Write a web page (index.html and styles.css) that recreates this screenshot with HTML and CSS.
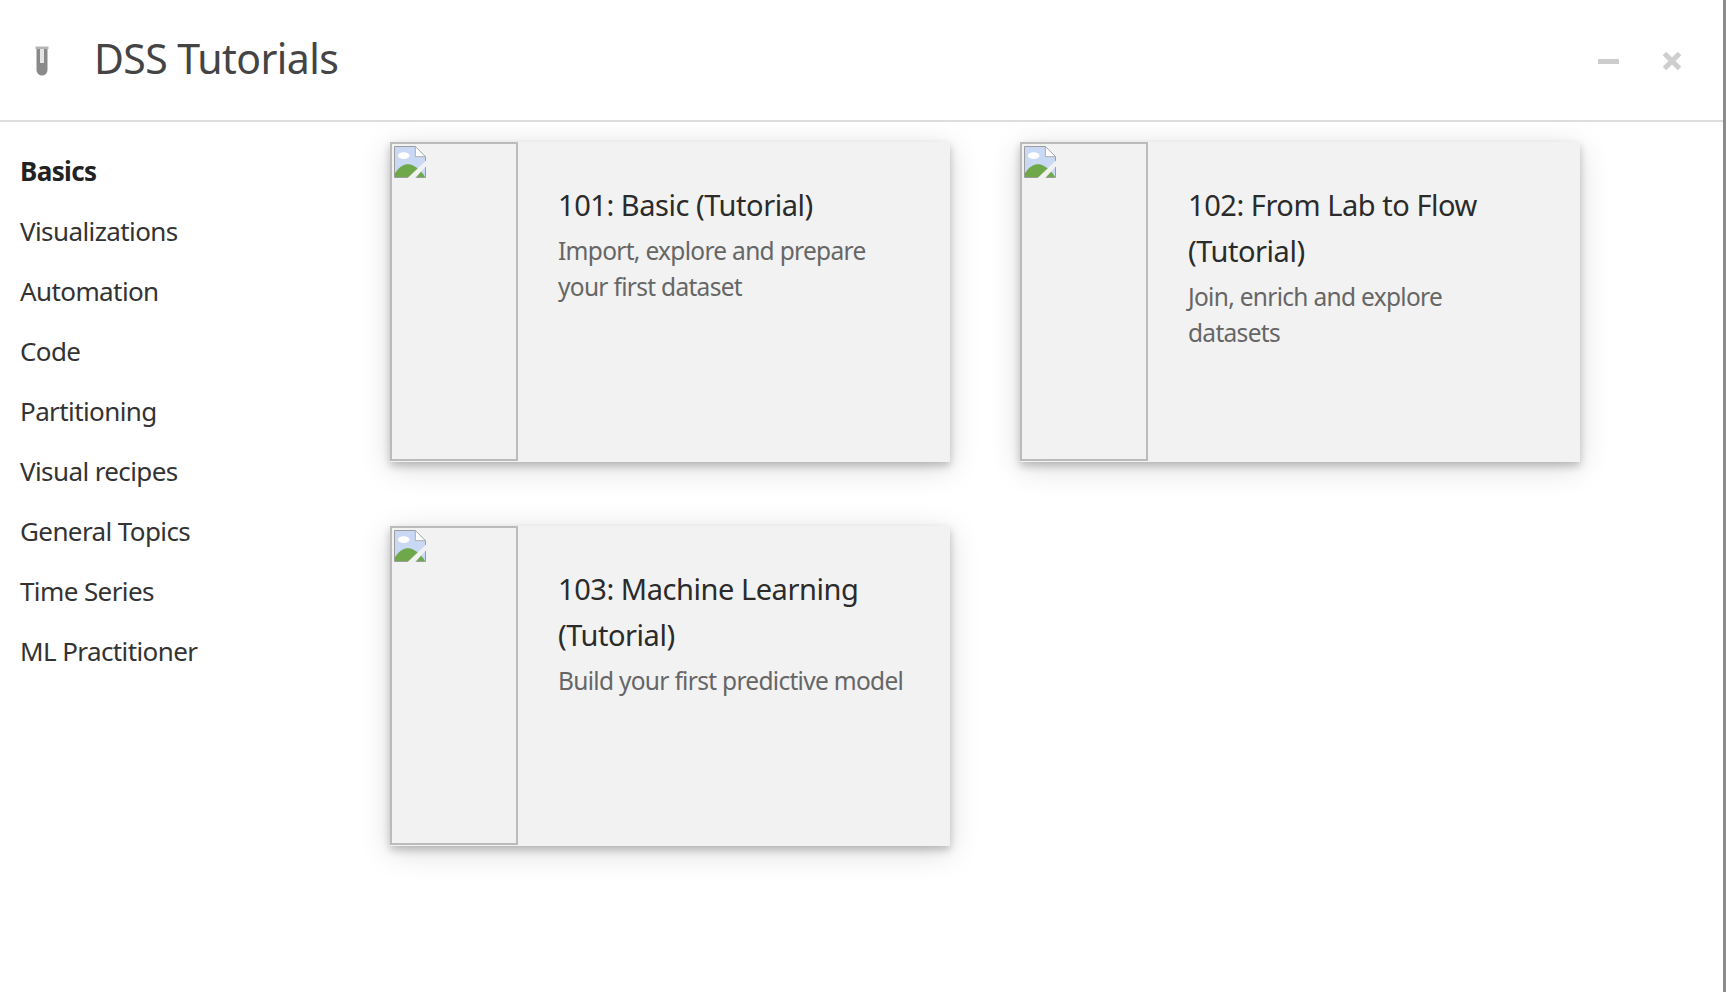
FILE: index.html
```html
<!DOCTYPE html>
<html lang="en">
<head>
    <meta charset="UTF-8">
    <title>DSS Tutorials</title>
    <link rel="stylesheet" href="styles.css">
</head>
<body>
    <header class="modal-header">
        <svg class="flask-icon" width="14" height="30" viewBox="0 0 14 30">
            <path d="M1.5 2H12.500V24A5.500 5.500 0 0 1 1.500 24Z" fill="#8a8a8a"/>
            <rect x="0.500" y="0.500" width="13" height="2.500" fill="#b5b5b5"/>
            <rect x="5" y="3" width="4" height="14" fill="#e4e4e4"/>
        </svg>
        <h1>DSS Tutorials</h1>
        <div class="window-btns">
            <span class="btn-min"></span>
            <svg class="btn-close" width="20" height="20" viewBox="0 0 20 20">
                <path d="M2.500 2.500L17.500 17.500M17.500 2.500L2.500 17.500" stroke="#cfcfcf" stroke-width="5"/>
            </svg>
        </div>
    </header>

    <div class="modal-body">
        <nav class="sidebar">
            <a class="active">Basics</a>
            <a>Visualizations</a>
            <a>Automation</a>
            <a>Code</a>
            <a>Partitioning</a>
            <a>Visual recipes</a>
            <a>General Topics</a>
            <a>Time Series</a>
            <a>ML Practitioner</a>
        </nav>

        <main class="cards">
            <div class="card">
                <div class="thumb">
                    <svg width="32" height="32" viewBox="0 0 33 33"><use href="#broken"/></svg>
                </div>
                <div class="card-text">
                    <h2>101: Basic (Tutorial)</h2>
                    <p>Import, explore and prepare your first dataset</p>
                </div>
            </div>
            <div class="card">
                <div class="thumb">
                    <svg width="32" height="32" viewBox="0 0 33 33"><use href="#broken"/></svg>
                </div>
                <div class="card-text">
                    <h2>102: From Lab to Flow (Tutorial)</h2>
                    <p>Join, enrich and explore datasets</p>
                </div>
            </div>
            <div class="card">
                <div class="thumb">
                    <svg width="32" height="32" viewBox="0 0 33 33"><use href="#broken"/></svg>
                </div>
                <div class="card-text">
                    <h2>103: Machine Learning (Tutorial)</h2>
                    <p>Build your first predictive model</p>
                </div>
            </div>
        </main>
    </div>

    <!-- broken image placeholder, same one on every card -->
    <svg class="defs" width="0" height="0">
        <defs>
            <g id="broken">
                <path d="M0.500 0.500H22L32.500 11V32.500H0.500Z" fill="#c9d9f5" stroke="#9a9a9a"/>
                <path d="M22 0.500V11H32.500Z" fill="#fff" stroke="#aaa"/>
                <ellipse cx="10" cy="10" rx="6" ry="3.500" fill="#fff"/>
                <path d="M1 32V28C6 20 12 18 17 19C23 21 29 26 32 32Z" fill="#6fa84a"/>
                <path d="M14 33L33 15V21L22 33Z" fill="#f1f1f1"/>
            </g>
        </defs>
    </svg>
</body>
</html>
```

FILE: styles.css
```css
* {
    margin: 0;
    padding: 0;
    box-sizing: border-box;
}

html, body {
    height: 100%;
}

body {
    font-family: "Noto Sans", Arial, sans-serif;
    background-color: #ffffff;
    color: #222222;
    border-right: 3px solid #8c8c8c;
    overflow: hidden;
}

.modal-header {
    height: 122px;
    display: flex;
    align-items: center;
    padding: 0 41px 0 35px;
    border-bottom: 2px solid #dddddd;
}

.flask-icon {
    margin-top: 1px;
}

.modal-header h1 {
    flex: 1;
    margin-left: 45px;
    padding-bottom: 4px;
    font-size: 41px;
    font-weight: 400;
    color: #444444;
    letter-spacing: -0.6px;
}

.window-btns {
    display: flex;
    align-items: center;
    gap: 43px;
    margin-top: 2px;
}

.btn-min {
    display: block;
    width: 21px;
    height: 5px;
    background-color: #cccccc;
}

.modal-body {
    display: flex;
}

.sidebar {
    width: 385px;
    padding: 19px 0 0 20px;
    display: flex;
    flex-direction: column;
}

.sidebar a {
    height: 60px;
    line-height: 60px;
    font-size: 26px;
    letter-spacing: -0.6px;
    color: #333333;
}

.sidebar a.active {
    font-weight: 700;
    color: #222222;
}

.cards {
    padding: 20px 0 0 5px;
    display: grid;
    grid-template-columns: 560px 560px;
    grid-auto-rows: 320px;
    column-gap: 70px;
    row-gap: 64px;
}

.card {
    display: flex;
    background-color: #f2f2f2;
    box-shadow: 0 4px 8px rgba(0, 0, 0, 0.22), 0 6px 28px rgba(0, 0, 0, 0.15);
}

.thumb {
    width: 128px;
    flex-shrink: 0;
    border: 2px solid #bbbbbb;
    padding: 2px;
    margin-bottom: 1px;
}

.thumb svg {
    display: block;
}

.card-text {
    padding: 40px 30px 0 40px;
}

.card-text h2 {
    font-size: 29px;
    line-height: 46px;
    font-weight: 400;
    letter-spacing: -0.45px;
    color: #2b2b2b;
}

.card-text p {
    max-width: 348px;
    margin-top: 5px;
    font-size: 24.500px;
    line-height: 36px;
    letter-spacing: -0.7px;
    color: #666666;
}

.defs {
    position: absolute;
}
```
